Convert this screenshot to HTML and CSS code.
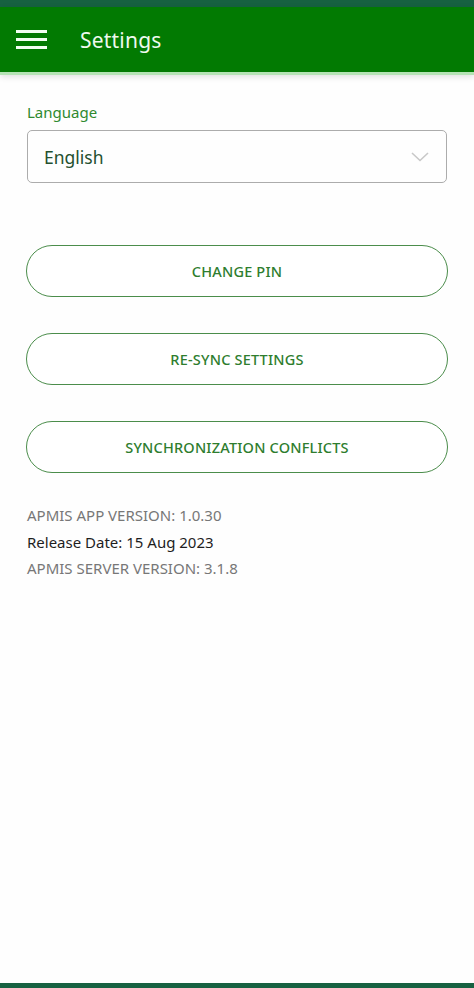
FILE: index.html
```html
<!DOCTYPE html>
<html lang="en">
<head>
    <meta charset="UTF-8">
    <meta name="viewport" content="width=device-width, initial-scale=1.0">
    <title>Settings</title>
    <link rel="stylesheet" href="styles.css">
</head>
<body>
    <div class="status-bar"></div>
    <header class="app-bar">
        <button class="menu-btn" aria-label="Menu">
            <span></span><span></span><span></span>
        </button>
        <h1>Settings</h1>
    </header>

    <main class="content">
        <label class="field-label" for="language">Language</label>
        <div class="select-box">
            <span class="select-value">English</span>
            <svg class="chevron" width="18" height="10" viewBox="0 0 18 10">
                <path d="M1 1 L9 8.5 L17 1" fill="none" stroke="#c8c8c8" stroke-width="1.6"/>
            </svg>
        </div>

        <div class="actions">
            <button class="outline-btn">CHANGE PIN</button>
            <button class="outline-btn">RE-SYNC SETTINGS</button>
            <button class="outline-btn">SYNCHRONIZATION CONFLICTS</button>
        </div>

        <div class="info">
            <p class="muted">APMIS APP VERSION: 1.0.30</p>
            <p>Release Date: 15 Aug 2023</p>
            <p class="muted">APMIS SERVER VERSION: 3.1.8</p>
        </div>
    </main>

    <div class="nav-bar"></div>
</body>
</html>
```

FILE: styles.css
```css
html, body {
    height: 100%;
}
body {
    margin: 0;
    display: flex;
    flex-direction: column;
    background: #fefefe;
    font-family: "Noto Sans", "Open Sans", sans-serif;
}
.status-bar {
    height: 7px;
    background: #176141;
}
.app-bar {
    height: 65px;
    background: #027a02;
    display: flex;
    align-items: center;
    border-bottom: 3px solid #b5e3b5;
    box-shadow: 0 2px 6px rgba(0, 0, 0, 0.12);
}
.menu-btn {
    width: 31px;
    margin-left: 16px;
    padding: 0;
    border: 0;
    background: none;
    display: flex;
    flex-direction: column;
    gap: 5px;
}
.menu-btn span {
    height: 3px;
    background: #f2fff2;
}
.app-bar h1 {
    margin: 0 0 0 33px;
    font-size: 21px;
    font-weight: 400;
    color: #eef9ee;
    letter-spacing: 0.2px;
}
.content {
    flex: 1;
    padding: 27px 27px 0 27px;
}
.field-label {
    display: block;
    font-size: 15px;
    color: #2f8a2f;
    margin-bottom: 8px;
}
.select-box {
    height: 51px;
    border: 1px solid #acacac;
    border-radius: 5px;
    display: flex;
    align-items: center;
    justify-content: space-between;
    padding: 0 17px 0 16px;
}
.select-value {
    font-size: 17.5px;
    color: #24502e;
}
.actions {
    margin: 62px -1px 0 -1px;
    display: flex;
    flex-direction: column;
    gap: 36px;
}
.outline-btn {
    height: 52px;
    width: 100%;
    border: 1px solid #4b8d4b;
    border-radius: 26px;
    background: #fff;
    color: #2e7d2e;
    font-family: "Noto Sans", sans-serif;
    font-size: 14.5px;
    font-weight: 500;
    letter-spacing: 0.2px;
}
.info {
    margin-top: 29px;
    font-size: 15px;
    line-height: 26.5px;
    color: #1e1e1e;
}
.info p {
    margin: 0;
}
.info .muted {
    color: #777;
}
.nav-bar {
    height: 5px;
    background: #176141;
}
```
